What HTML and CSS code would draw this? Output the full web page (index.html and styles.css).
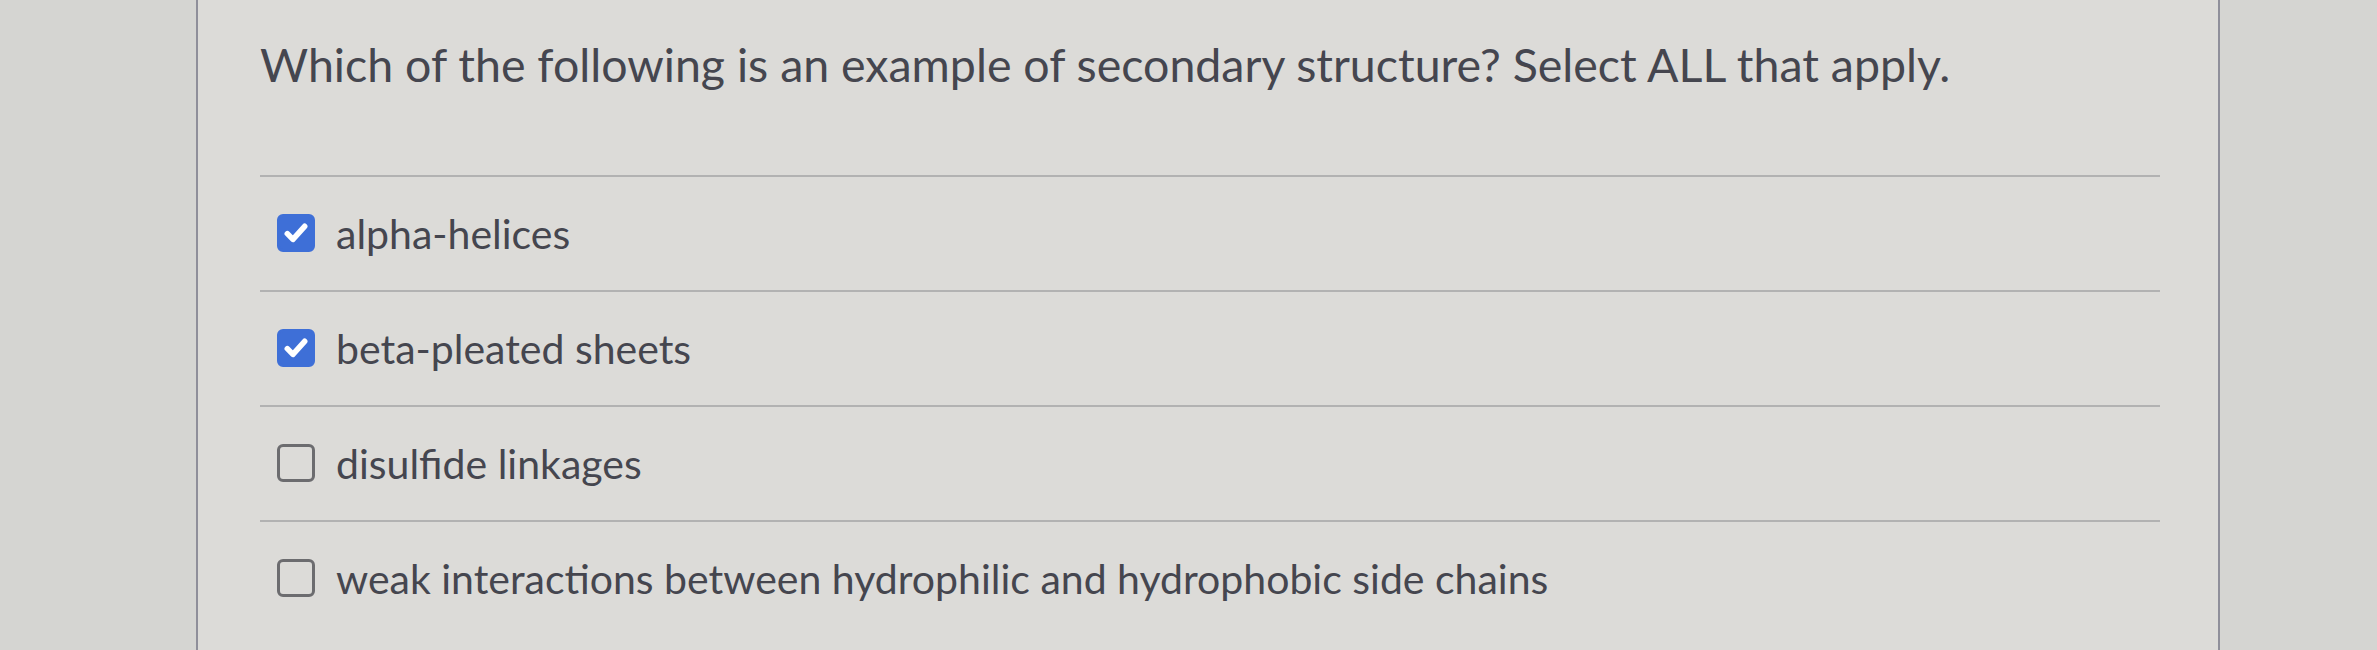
FILE: index.html
```html
<!DOCTYPE html>
<html lang="en">
<head>
  <meta charset="UTF-8">
  <meta name="viewport" content="width=device-width, initial-scale=1.0">
  <title>Quiz Question</title>
  <link rel="stylesheet" href="styles.css">
</head>
<body>
  <div class="quiz-panel">
    <div class="question-text">Which of the following is an example of secondary structure? Select ALL that apply.</div>

    <div class="answers">
      <label class="answer">
        <input type="checkbox" class="answer-input" checked>
        <span class="check-box">
          <svg viewBox="0 0 24 24" class="check-mark"><path d="M5.5 12.5l4.2 4.3L18.5 7" /></svg>
        </span>
        <span class="answer-label">alpha-helices</span>
      </label>

      <label class="answer">
        <input type="checkbox" class="answer-input" checked>
        <span class="check-box">
          <svg viewBox="0 0 24 24" class="check-mark"><path d="M5.5 12.5l4.2 4.3L18.5 7" /></svg>
        </span>
        <span class="answer-label">beta-pleated sheets</span>
      </label>

      <label class="answer">
        <input type="checkbox" class="answer-input">
        <span class="check-box">
          <svg viewBox="0 0 24 24" class="check-mark"><path d="M5.5 12.5l4.2 4.3L18.5 7" /></svg>
        </span>
        <span class="answer-label">disulfide linkages</span>
      </label>

      <label class="answer">
        <input type="checkbox" class="answer-input">
        <span class="check-box">
          <svg viewBox="0 0 24 24" class="check-mark"><path d="M5.5 12.5l4.2 4.3L18.5 7" /></svg>
        </span>
        <span class="answer-label">weak interactions between hydrophilic and hydrophobic side chains</span>
      </label>
    </div>
  </div>
</body>
</html>
```

FILE: styles.css
```css
body, html {
  margin: 0;
  padding: 0;
  height: 100%;
  font-family: Lato, "Open Sans", sans-serif;
  background-color: #d5d5d2;
  overflow: hidden;
}

.quiz-panel {
  margin-left: 196px;
  width: 2024px;
  height: 100%;
  box-sizing: border-box;
  padding: 37px 58px 0 62px;
  background-color: #dcdbd8;
  border-left: 2px solid #8f8f9a;
  border-right: 2px solid #8f8f9a;
}

.question-text {
  font-size: 46.5px;
  line-height: 1.2;
  color: #45464f;
  margin-bottom: 82px;
}

/* Answer rows */
.answer {
  display: flex;
  align-items: center;
  height: 113px;
  padding-left: 17px;
  border-top: 2px solid #b2b2b2;
  cursor: pointer;
}

.answer-input {
  display: none;
}

.check-box {
  width: 38px;
  height: 38px;
  box-sizing: border-box;
  margin-right: 21px;
  border: 3px solid #6c6c6f;
  border-radius: 6px;
  display: flex;
  align-items: center;
  justify-content: center;
  flex-shrink: 0;
}

.check-mark {
  width: 32px;
  height: 32px;
  fill: none;
  stroke: #ffffff;
  stroke-width: 4.2;
  stroke-linecap: round;
  stroke-linejoin: round;
  visibility: hidden;
}

.answer-input:checked + .check-box {
  background-color: #3e6fd7;
  border-color: #3e6fd7;
}

.answer-input:checked + .check-box .check-mark {
  visibility: visible;
}

.answer-label {
  font-size: 41px;
  color: #45464f;
}
```
